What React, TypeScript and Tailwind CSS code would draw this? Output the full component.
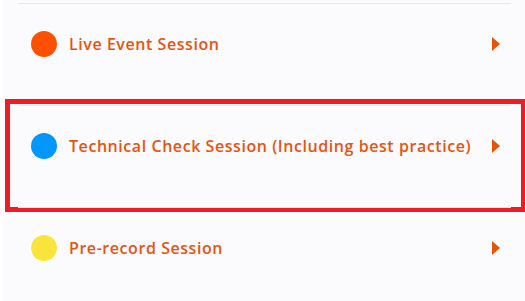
const SESSIONS = [
  { name: 'Live Event Session', dot: 'bg-[#ff5000]' },
  { name: 'Technical Check Session (Including best practice)', dot: 'bg-[#0098ff]', highlighted: true },
  { name: 'Pre-record Session', dot: 'bg-[#f9e43b]' },
];

function Caret() {
  return (
    <svg width="8" height="14" viewBox="0 0 8 14" className="shrink-0">
      <path d="M0 0 L8 7 L0 14 Z" fill="#e85208" />
    </svg>
  );
}

export default function App() {
  return (
    <div className="w-[525px] h-[301px] bg-white pl-[3px] overflow-hidden">
      <div className="h-full bg-[#fbfafd] pt-[3px]">
        {SESSIONS.map((s) => (
          <div key={s.name} className="relative">
            <div className="absolute top-0 left-[15px] right-[14px] border-t border-[#eee6e6]" />
            <div className="flex items-center h-[102px] pb-[20px] pl-[28px] pr-[25px]">
              <span className={`w-[26px] h-[26px] rounded-full ${s.dot} ring-1 ring-white shrink-0`} />
              <span className="ml-[12px] flex-1 text-[16px] leading-[20px] font-semibold tracking-[0.56px] text-[#e6540f] font-['Open_Sans','Liberation_Sans',sans-serif]">
                {s.name}
              </span>
              <Caret />
            </div>
            {s.highlighted && (
              <div className="absolute left-[2px] right-[-1px] top-[-6px] h-[113px] border-[5px] border-[#ee1c25] pointer-events-none" />
            )}
          </div>
        ))}
      </div>
    </div>
  );
}
